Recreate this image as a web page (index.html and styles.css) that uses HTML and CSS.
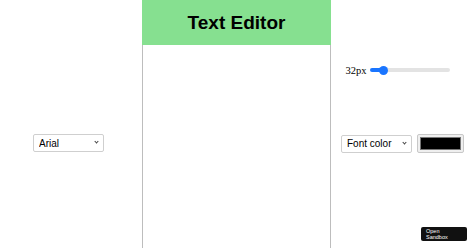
FILE: index.html
```html
<!DOCTYPE html>
<html>
<head>
<meta charset="utf-8">
<link rel="stylesheet" href="styles.css">
</head>
<body>
<div class="app">
  <div class="side left">
    <div class="sel-wrap shift">
      <select class="sel">
        <option>Arial</option>
      </select>
    </div>
  </div>
  <div class="center">
    <div class="header">Text Editor</div>
    <div class="editor"></div>
  </div>
  <div class="side right">
    <div class="size-row">
      <span class="size-label">32px</span>
      <input class="range" type="range" min="10" max="180" value="32">
    </div>
    <div class="color-row">
      <div class="sel-wrap">
        <select class="sel">
          <option>Font color</option>
        </select>
      </div>
      <div class="swatch"><div class="swatch-inner"></div></div>
    </div>
  </div>
</div>
<div class="sandbox">Open<br>Sandbox</div>
</body>
</html>
```
FILE: styles.css
```css
html, body {
  margin: 0;
  padding: 0;
  background: #fff;
}
.app {
  display: flex;
  height: 248px;
  overflow: hidden;
}
.side {
  display: flex;
  flex-direction: column;
  align-items: center;
}
.left {
  width: 142px;
  padding-top: 134px;
  box-sizing: border-box;
}
.shift {
  margin-right: 5px;
}
.center {
  width: 189px;
  border-left: 1px solid #bdbdbd;
  border-right: 1px solid #bdbdbd;
  box-sizing: border-box;
  display: flex;
  flex-direction: column;
}
.header {
  height: 45px;
  background: #86e090;
  font-family: "Liberation Sans", Arial, sans-serif;
  font-weight: bold;
  font-size: 19px;
  display: flex;
  align-items: center;
  justify-content: center;
  color: #000;
  margin: 0 -1px;
}
.editor {
  flex: 1;
}
.right {
  flex: 1;
  padding-top: 63px;
}
.size-row {
  display: flex;
  align-items: center;
  height: 14px;
  margin-left: -10px;
}
.size-label {
  font-family: "Liberation Serif", "Times New Roman", serif;
  font-size: 10.5px;
  color: #000;
  margin-right: 3px;
}
.range {
  -webkit-appearance: none;
  appearance: none;
  width: 80px;
  height: 9px;
  margin: 0;
  background: transparent;
}
.range::-webkit-slider-runnable-track {
  height: 4px;
  border-radius: 2px;
  background: linear-gradient(to right, #1a75ff 0, #1a75ff 16px, #e3e3e3 16px, #e3e3e3 100%);
}
.range::-webkit-slider-thumb {
  -webkit-appearance: none;
  width: 9px;
  height: 9px;
  border-radius: 50%;
  background: #1a75ff;
  margin-top: -2.5px;
  border: none;
}
.color-row {
  display: flex;
  align-items: center;
  gap: 5px;
  margin-top: 57px;
}
.sel-wrap {
  position: relative;
  width: 71px;
  height: 18px;
}
.sel-wrap::after {
  content: "";
  position: absolute;
  right: 6px;
  top: 6px;
  width: 2px;
  height: 2px;
  border-right: 1px solid #444;
  border-bottom: 1px solid #444;
  transform: rotate(45deg);
  pointer-events: none;
}
.sel {
  -webkit-appearance: none;
  appearance: none;
  width: 71px;
  height: 18px;
  box-sizing: border-box;
  font-family: "Liberation Sans", Arial, sans-serif;
  font-size: 10px;
  color: #000;
  background: #fff;
  border: 1px solid #cfcfcf;
  border-radius: 2px;
  padding: 0 5px;
  margin: 0;
  display: block;
}
.swatch {
  width: 47px;
  height: 19px;
  box-sizing: border-box;
  border: 1px solid #c8c8c8;
  border-radius: 2px;
  padding: 2px;
  background: #efefef;
}
.swatch-inner {
  width: 100%;
  height: 100%;
  background: #000;
  border: 1px solid #777;
  box-sizing: border-box;
}
.sandbox {
  position: absolute;
  left: 421px;
  top: 227px;
  width: 46px;
  height: 14px;
  background: #111;
  border-radius: 2px;
  color: #fff;
  font-family: "Liberation Sans", Arial, sans-serif;
  font-size: 5.5px;
  line-height: 6px;
  padding: 1px 0 0 5px;
  box-sizing: border-box;
}
```
